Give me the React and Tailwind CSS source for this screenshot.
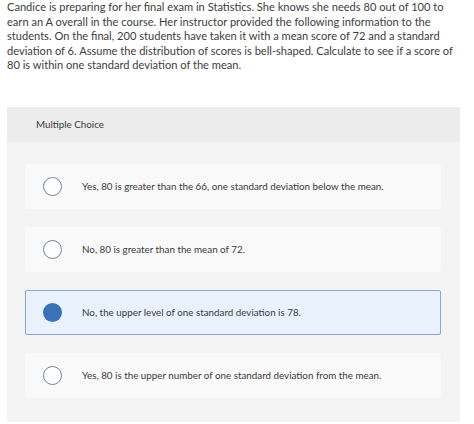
import React, { useState } from 'react';

const question = [
    'Candice is preparing for her final exam in Statistics. She knows she needs 80 out of 100 to',
    'earn an A overall in the course. Her instructor provided the following information to the',
    'students. On the final, 200 students have taken it with a mean score of 72 and a standard',
    'deviation of 6. Assume the distribution of scores is bell-shaped. Calculate to see if a score of',
    '80 is within one standard deviation of the mean.',
];

const choices = [
    'Yes, 80 is greater than the 66, one standard deviation below the mean.',
    'No, 80 is greater than the mean of 72.',
    'No, the upper level of one standard deviation is 78.',
    'Yes, 80 is the upper number of one standard deviation from the mean.',
];

function Choice({ text, selected, onPick }) {
    return (
        <button
            onClick={onPick}
            className={`flex items-center h-[45px] w-full text-left rounded-[2px] border pl-[17px] ${
                selected ? 'bg-[#e9f2fc] border-[#86a9cf]' : 'bg-[#f9f9f9] border-[#f9f9f9]'
            }`}
        >
            {/* radio dot */}
            {selected ? (
                <span className="w-[19px] h-[19px] rounded-full bg-[#3a72b8] shrink-0" />
            ) : (
                <span className="w-[19px] h-[19px] rounded-full border-[1.5px] border-[#6f8299] bg-white shrink-0" />
            )}
            <span className="ml-[20px] text-[9.8px] text-[#3a3a3a]">{text}</span>
        </button>
    );
}

export default function App() {
    const [picked, setPicked] = useState(2);

    return (
        <div className="w-[474px] h-[424px] bg-white overflow-hidden" style={{ fontFamily: 'Lato, "Open Sans", sans-serif' }}>
            <div className="pl-[7px] text-[11.1px] leading-[14.6px] text-[#3d3d3d]">
                {question.map((line, i) => (
                    <div key={i} className="whitespace-nowrap">{line}</div>
                ))}
            </div>

            <div className="ml-[7px] mt-[34px] w-[453px] bg-[#f4f4f4]">
                <div className="h-[35px] bg-[#ececec] flex items-center pl-[29px] text-[9.8px] text-[#3a3a3a]">
                    Multiple Choice
                </div>
                <div className="flex flex-col gap-[18px] pt-[22px] pb-[24px] pl-[18px] pr-[19px]">
                    {choices.map((c, i) => (
                        <Choice key={i} text={c} selected={picked === i} onPick={() => setPicked(i)} />
                    ))}
                </div>
            </div>
        </div>
    );
}
